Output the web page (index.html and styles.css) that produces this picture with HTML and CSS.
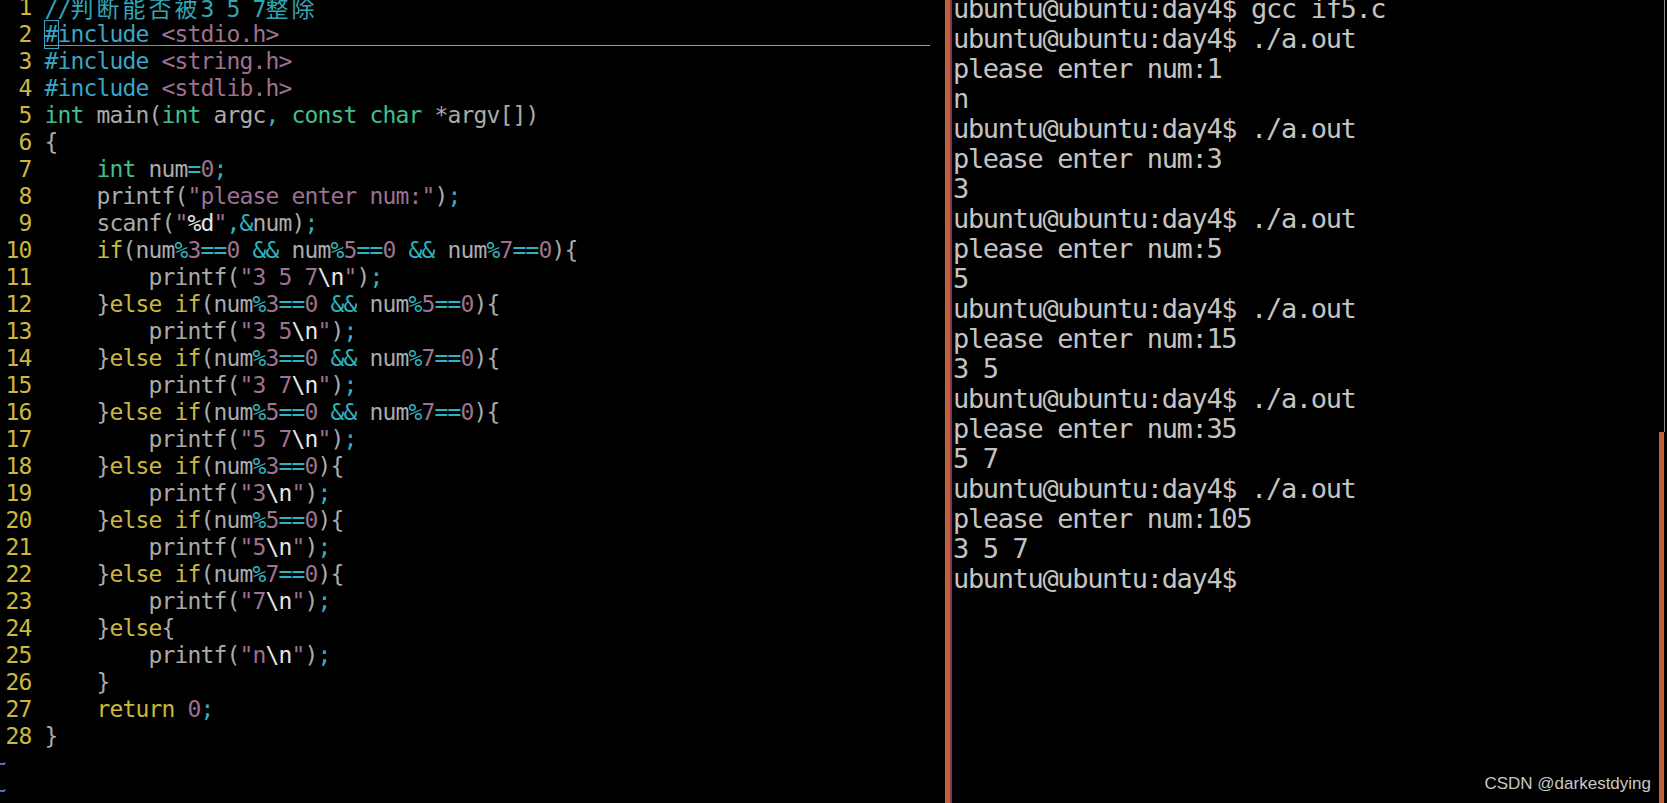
FILE: index.html
```html
<!DOCTYPE html>
<html lang="zh">
<head>
<meta charset="utf-8">
<title>vim + terminal</title>
<link rel="stylesheet" href="styles.css">
</head>
<body>
<div class="screen">
  <section class="vim">
    <div class="row"><span class="ln">  1 </span><span class="code"><span class="c">//<span class="cjk">判断能否被</span>3 5 7<span class="cjk">整除</span></span></span></div>
    <div class="row"><span class="ln">  2 </span><span class="code cursorline"><span class="p"><span class="cursor">#</span>include</span> <span class="n">&lt;stdio.h&gt;</span></span></div>
    <div class="row"><span class="ln">  3 </span><span class="code"><span class="p">#include</span> <span class="n">&lt;string.h&gt;</span></span></div>
    <div class="row"><span class="ln">  4 </span><span class="code"><span class="p">#include</span> <span class="n">&lt;stdlib.h&gt;</span></span></div>
    <div class="row"><span class="ln">  5 </span><span class="code"><span class="t">int</span> main(<span class="t">int</span> argc<span class="o">,</span> <span class="t">const</span> <span class="t">char</span> *argv[])</span></div>
    <div class="row"><span class="ln">  6 </span><span class="code">{</span></div>
    <div class="row"><span class="ln">  7 </span><span class="code">    <span class="t">int</span> num<span class="o">=</span><span class="n">0</span><span class="o">;</span></span></div>
    <div class="row"><span class="ln">  8 </span><span class="code">    printf(<span class="n">"please enter num:"</span>)<span class="o">;</span></span></div>
    <div class="row"><span class="ln">  9 </span><span class="code">    scanf(<span class="n">"</span><span class="s">%d</span><span class="n">"</span><span class="o">,&amp;</span>num)<span class="o">;</span></span></div>
    <div class="row"><span class="ln"> 10 </span><span class="code">    <span class="k">if</span>(num<span class="o">%</span><span class="n">3</span><span class="o">==</span><span class="n">0</span> <span class="o">&amp;&amp;</span> num<span class="o">%</span><span class="n">5</span><span class="o">==</span><span class="n">0</span> <span class="o">&amp;&amp;</span> num<span class="o">%</span><span class="n">7</span><span class="o">==</span><span class="n">0</span>){</span></div>
    <div class="row"><span class="ln"> 11 </span><span class="code">        printf(<span class="n">"3 5 7</span><span class="s">\n</span><span class="n">"</span>)<span class="o">;</span></span></div>
    <div class="row"><span class="ln"> 12 </span><span class="code">    }<span class="k">else</span> <span class="k">if</span>(num<span class="o">%</span><span class="n">3</span><span class="o">==</span><span class="n">0</span> <span class="o">&amp;&amp;</span> num<span class="o">%</span><span class="n">5</span><span class="o">==</span><span class="n">0</span>){</span></div>
    <div class="row"><span class="ln"> 13 </span><span class="code">        printf(<span class="n">"3 5</span><span class="s">\n</span><span class="n">"</span>)<span class="o">;</span></span></div>
    <div class="row"><span class="ln"> 14 </span><span class="code">    }<span class="k">else</span> <span class="k">if</span>(num<span class="o">%</span><span class="n">3</span><span class="o">==</span><span class="n">0</span> <span class="o">&amp;&amp;</span> num<span class="o">%</span><span class="n">7</span><span class="o">==</span><span class="n">0</span>){</span></div>
    <div class="row"><span class="ln"> 15 </span><span class="code">        printf(<span class="n">"3 7</span><span class="s">\n</span><span class="n">"</span>)<span class="o">;</span></span></div>
    <div class="row"><span class="ln"> 16 </span><span class="code">    }<span class="k">else</span> <span class="k">if</span>(num<span class="o">%</span><span class="n">5</span><span class="o">==</span><span class="n">0</span> <span class="o">&amp;&amp;</span> num<span class="o">%</span><span class="n">7</span><span class="o">==</span><span class="n">0</span>){</span></div>
    <div class="row"><span class="ln"> 17 </span><span class="code">        printf(<span class="n">"5 7</span><span class="s">\n</span><span class="n">"</span>)<span class="o">;</span></span></div>
    <div class="row"><span class="ln"> 18 </span><span class="code">    }<span class="k">else</span> <span class="k">if</span>(num<span class="o">%</span><span class="n">3</span><span class="o">==</span><span class="n">0</span>){</span></div>
    <div class="row"><span class="ln"> 19 </span><span class="code">        printf(<span class="n">"3</span><span class="s">\n</span><span class="n">"</span>)<span class="o">;</span></span></div>
    <div class="row"><span class="ln"> 20 </span><span class="code">    }<span class="k">else</span> <span class="k">if</span>(num<span class="o">%</span><span class="n">5</span><span class="o">==</span><span class="n">0</span>){</span></div>
    <div class="row"><span class="ln"> 21 </span><span class="code">        printf(<span class="n">"5</span><span class="s">\n</span><span class="n">"</span>)<span class="o">;</span></span></div>
    <div class="row"><span class="ln"> 22 </span><span class="code">    }<span class="k">else</span> <span class="k">if</span>(num<span class="o">%</span><span class="n">7</span><span class="o">==</span><span class="n">0</span>){</span></div>
    <div class="row"><span class="ln"> 23 </span><span class="code">        printf(<span class="n">"7</span><span class="s">\n</span><span class="n">"</span>)<span class="o">;</span></span></div>
    <div class="row"><span class="ln"> 24 </span><span class="code">    }<span class="k">else</span>{</span></div>
    <div class="row"><span class="ln"> 25 </span><span class="code">        printf(<span class="n">"n</span><span class="s">\n</span><span class="n">"</span>)<span class="o">;</span></span></div>
    <div class="row"><span class="ln"> 26 </span><span class="code">    }</span></div>
    <div class="row"><span class="ln"> 27 </span><span class="code">    <span class="k">return</span> <span class="n">0</span><span class="o">;</span></span></div>
    <div class="row"><span class="ln"> 28 </span><span class="code">}</span></div>
    <div class="row"><span class="tilde">~</span></div>
    <div class="row"><span class="tilde">~</span></div>
  </section>
  <div class="split"></div>
  <section class="term">
    <div class="term-text">
      <div class="tl">ubuntu@ubuntu:day4$ gcc if5.c</div>
      <div class="tl">ubuntu@ubuntu:day4$ ./a.out</div>
      <div class="tl">please enter num:1</div>
      <div class="tl">n</div>
      <div class="tl">ubuntu@ubuntu:day4$ ./a.out</div>
      <div class="tl">please enter num:3</div>
      <div class="tl">3</div>
      <div class="tl">ubuntu@ubuntu:day4$ ./a.out</div>
      <div class="tl">please enter num:5</div>
      <div class="tl">5</div>
      <div class="tl">ubuntu@ubuntu:day4$ ./a.out</div>
      <div class="tl">please enter num:15</div>
      <div class="tl">3 5</div>
      <div class="tl">ubuntu@ubuntu:day4$ ./a.out</div>
      <div class="tl">please enter num:35</div>
      <div class="tl">5 7</div>
      <div class="tl">ubuntu@ubuntu:day4$ ./a.out</div>
      <div class="tl">please enter num:105</div>
      <div class="tl">3 5 7</div>
      <div class="tl">ubuntu@ubuntu:day4$</div>
    </div>
    <div class="edge">
      <div class="edge-top"></div>
      <div class="edge-bottom"></div>
    </div>
  </section>
  <div class="watermark">CSDN @darkestdying</div>
</div>
</body>
</html>
```

FILE: styles.css
```css
html, body {
  margin: 0;
  padding: 0;
  background: #000;
  overflow: hidden;
}

.screen {
  position: relative;
  display: flex;
  width: 1667px;
  height: 803px;
  background: #000;
  overflow: hidden;
}

/* ---------- vim pane ---------- */
.vim {
  flex: 0 0 952.5px;
  margin-left: -7.5px;
  margin-top: -6px;
  font-family: "DejaVu Sans Mono", "Noto Sans CJK SC", monospace;
  font-size: 23px;
  letter-spacing: -0.85px;
  line-height: 27px;
  color: #ababab;
}

.row {
  display: flex;
  height: 27px;
  white-space: pre;
}

.ln {
  flex: 0 0 52px;
  color: #cbb83c;
}

.code {
  flex: 0 0 885.5px;
}

.cursorline {
  background:
    linear-gradient(#3fa4c4, #3fa4c4) no-repeat 0 24px / 117px 1px,
    linear-gradient(#9c9c9c, #9c9c9c) no-repeat 117px 24px / 768.5px 1px;
}

.cursor {
  outline: 1px solid #3fa4c4;
  outline-offset: 0;
  display: inline-block;
  height: 27px;
}

.tilde {
  color: #5b7fc4;
}

.c { color: #2fa7b7; }
.p { color: #3ba5c7; }
.n { color: #9d7191; }
.t { color: #42c08a; }
.k { color: #cbb83c; }
.o { color: #2fb3bf; }
.s { color: #e6e6e6; }

.cjk {
  font-family: "Noto Sans CJK SC", sans-serif;
  letter-spacing: 3px;
}

/* ---------- split bar ---------- */
.split {
  flex: 0 0 7px;
  background: linear-gradient(to right, #c2603a 0 5px, #8a3550 5px 7px);
}

/* ---------- terminal ---------- */
.term {
  flex: 1;
  display: flex;
  min-width: 0;
}

.term-text {
  flex: 1;
  padding-left: 1px;
  margin-top: -6px;
  font-family: "DejaVu Sans Mono", monospace;
  font-size: 27px;
  letter-spacing: -1.35px;
  line-height: 30px;
  color: #c4c4c4;
}

.tl {
  height: 30px;
  white-space: pre;
}

.edge {
  flex: 0 0 8px;
  display: flex;
  flex-direction: column;
}

.edge-top {
  flex: 0 0 432px;
  margin-right: 2px;
  border-right: 1px solid #8c8c8c;
}

.edge-bottom {
  flex: 1;
  margin-right: 3px;
  background: #c2603a;
}

/* ---------- watermark overlay ---------- */
.watermark {
  position: absolute;
  right: 16px;
  bottom: 9px;
  font-family: "Liberation Sans", Arial, sans-serif;
  font-size: 17px;
  color: #c8c8c8;
}
```
